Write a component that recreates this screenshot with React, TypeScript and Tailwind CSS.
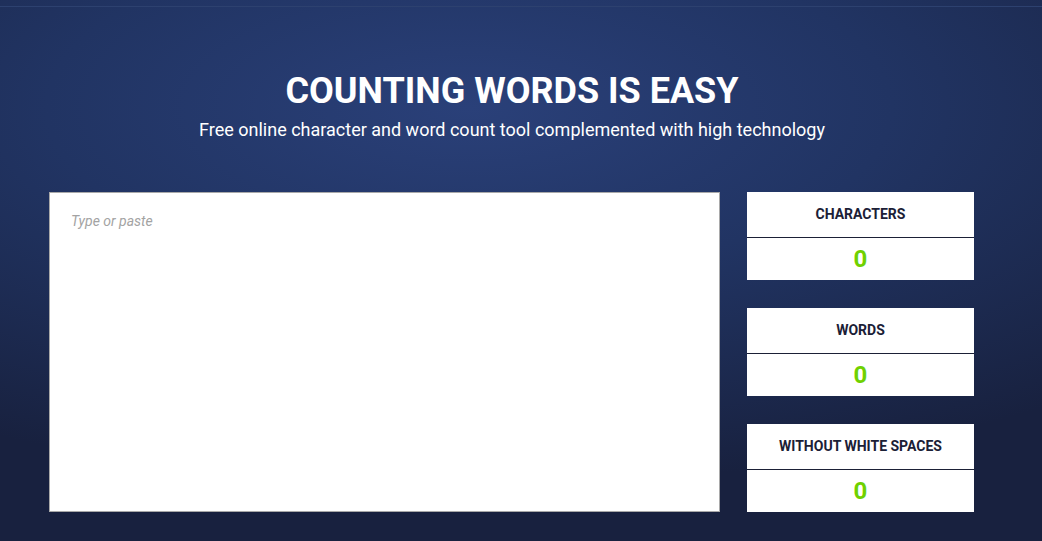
import { useState } from 'react'

function StatCard({ label, value }: { label: string; value: number }) {
  return (
    <div className="bg-white">
      <div className="h-[46px] flex items-center justify-center border-b border-[#1b2036] text-[14px] font-bold text-[#1b2036] uppercase">
        {label}
      </div>
      <div className="h-[42px] flex items-center justify-center text-[24px] font-bold text-[#6fd100]">
        {value}
      </div>
    </div>
  )
}

export default function App() {
  const [text, setText] = useState('')
  const chars = text.length
  const words = text.trim() ? text.trim().split(/\s+/).length : 0
  const noSpaces = text.replace(/\s/g, '').length

  return (
    <div
      className="min-h-[541px] w-full bg-[radial-gradient(ellipse_90%_70%_at_45%_20%,#2a4079_0%,#213463_45%,#18213f_100%)]"
      style={{ fontFamily: 'Roboto, "Liberation Sans", sans-serif' }}
    >
      <div className="h-[7px] border-b border-[#2d416f]" />
      <div className="w-[1024px] pt-[62px] flex flex-col items-center">
        <h1 className="text-[36px] leading-[44px] font-bold text-white">COUNTING WORDS IS EASY</h1>
        <p className="mt-[5px] text-[18px] leading-[24px] text-white">
          Free online character and word count tool complemented with high technology
        </p>
        <div className="mt-[50px] ml-[49px] self-start w-[925px] flex gap-[27px]">
          <textarea
            value={text}
            onChange={(e) => setText(e.target.value)}
            placeholder="Type or paste"
            className="w-[671px] h-[320px] bg-white border border-[#a9a9a9] px-[21px] py-[18px] text-[14px] text-[#333] resize-none outline-none placeholder:italic placeholder:text-[#a3a3a3]"
          />
          <div className="w-[227px] flex flex-col gap-[28px]">
            <StatCard label="Characters" value={chars} />
            <StatCard label="Words" value={words} />
            <StatCard label="Without white spaces" value={noSpaces} />
          </div>
        </div>
      </div>
    </div>
  )
}
